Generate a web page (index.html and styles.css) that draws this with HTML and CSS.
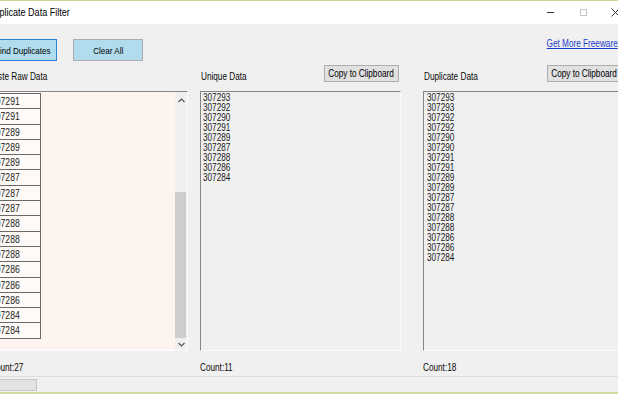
FILE: index.html
```html
<!DOCTYPE html>
<html>
<head>
<meta charset="utf-8">
<title>Duplicate Data Filter</title>
<link rel="stylesheet" href="styles.css">
</head>
<body>
<div class="window">
  <div class="titlebar">
    <span class="title sq">Duplicate Data Filter</span>
    <div class="controls">
      <span class="ctl"><span class="min-glyph"></span></span>
      <span class="ctl"><span class="max-glyph"></span></span>
      <span class="ctl"><svg class="close-glyph" width="9" height="9" viewBox="0 0 9 9"><path d="M0.5 0.5L8.5 8.5M8.5 0.5L0.5 8.5" stroke="#333" stroke-width="1"/></svg></span>
    </div>
  </div>
  <div class="content">
    <div class="toolbar">
      <button class="btn btn-blue btn-focus"><span class="sqc">Find Duplicates</span></button>
      <button class="btn btn-blue btn-clear"><span class="sqc">Clear All</span></button>
      <a class="link" href="#">Get More Freeware</a>
    </div>
    <div class="columns">
      <div class="col">
        <div class="colhead"><span class="label sq">Paste Raw Data</span></div>
        <div class="panel panel-raw">
          <div class="raw-body">
            <div class="cells">
              <div class="cell"><span class="sq">307291</span></div>
              <div class="cell"><span class="sq">307291</span></div>
              <div class="cell"><span class="sq">307289</span></div>
              <div class="cell"><span class="sq">307289</span></div>
              <div class="cell"><span class="sq">307289</span></div>
              <div class="cell"><span class="sq">307287</span></div>
              <div class="cell"><span class="sq">307287</span></div>
              <div class="cell"><span class="sq">307287</span></div>
              <div class="cell"><span class="sq">307288</span></div>
              <div class="cell"><span class="sq">307288</span></div>
              <div class="cell"><span class="sq">307288</span></div>
              <div class="cell"><span class="sq">307286</span></div>
              <div class="cell"><span class="sq">307286</span></div>
              <div class="cell"><span class="sq">307286</span></div>
              <div class="cell"><span class="sq">307284</span></div>
              <div class="cell"><span class="sq">307284</span></div>
            </div>
          </div>
          <div class="scrollbar">
            <div class="sb-btn sb-up"><svg width="7" height="5" viewBox="0 0 7 5"><path d="M0.5 4L3.5 1L6.5 4" fill="none" stroke="#555" stroke-width="1.2"/></svg></div>
            <div class="sb-track"><div class="sb-thumb"></div></div>
            <div class="sb-btn sb-down"><svg width="7" height="5" viewBox="0 0 7 5"><path d="M0.5 1L3.5 4L6.5 1" fill="none" stroke="#555" stroke-width="1.2"/></svg></div>
          </div>
        </div>
        <div class="count count-raw"><span class="sq">Count:27</span></div>
      </div>
      <div class="col col-unique">
        <div class="colhead">
          <span class="label sq">Unique Data</span>
          <button class="btn btn-copy"><span class="sqc">Copy to Clipboard</span></button>
        </div>
        <div class="panel panel-list">
          <div class="list">
            <div class="line">307293</div>
            <div class="line">307292</div>
            <div class="line">307290</div>
            <div class="line">307291</div>
            <div class="line">307289</div>
            <div class="line">307287</div>
            <div class="line">307288</div>
            <div class="line">307286</div>
            <div class="line">307284</div>
          </div>
        </div>
        <div class="count"><span class="sq">Count:11</span></div>
      </div>
      <div class="col col-dup">
        <div class="colhead">
          <span class="label sq">Duplicate Data</span>
          <button class="btn btn-copy"><span class="sqc">Copy to Clipboard</span></button>
        </div>
        <div class="panel panel-list panel-dup">
          <div class="list">
            <div class="line">307293</div>
            <div class="line">307293</div>
            <div class="line">307292</div>
            <div class="line">307292</div>
            <div class="line">307290</div>
            <div class="line">307290</div>
            <div class="line">307291</div>
            <div class="line">307291</div>
            <div class="line">307289</div>
            <div class="line">307289</div>
            <div class="line">307287</div>
            <div class="line">307287</div>
            <div class="line">307288</div>
            <div class="line">307288</div>
            <div class="line">307286</div>
            <div class="line">307286</div>
            <div class="line">307284</div>
          </div>
        </div>
        <div class="count"><span class="sq">Count:18</span></div>
      </div>
    </div>
  </div>
  <div class="footer"><div class="sizebox"></div></div>
</div>
</body>
</html>
```

FILE: styles.css
```css
* { box-sizing: border-box; }

html, body {
  margin: 0;
  padding: 0;
  width: 618px;
  height: 394px;
  overflow: hidden;
  background: #f0f0f0;
}

body {
  font-family: "Liberation Sans", Arial, sans-serif;
  font-size: 10px;
  color: #0a0a0a;
}

/* Narrow (Arial Narrow-like) rendering of text */
.sq {
  display: inline-block;
  white-space: nowrap;
  transform: scaleX(0.82);
  transform-origin: left center;
}

.sqc {
  display: inline-block;
  white-space: nowrap;
  transform: scaleX(0.82);
  transform-origin: center center;
}

.window {
  width: 652px;
  height: 394px;
  margin-left: -20px;
  display: flex;
  flex-direction: column;
  background: #f0f0f0;
  border-bottom: 2px solid #cddca0;
}

.titlebar {
  height: 24px;
  flex: none;
  background: #fff;
  border-top: 1px solid #cbd99c;
  display: flex;
  align-items: center;
}

.title {
  margin-left: 8px;
  font-size: 11px;
  color: #000;
  line-height: 23px;
}

.controls {
  margin-left: auto;
  display: flex;
  height: 23px;
}

.ctl {
  width: 32.5px;
  height: 23px;
  display: flex;
  align-items: center;
  justify-content: center;
}

.min-glyph {
  width: 7px;
  height: 1px;
  background: #333;
}

.max-glyph {
  width: 7px;
  height: 7px;
  border: 1px solid #c4c4c4;
}

.content {
  padding: 15px 14px 0 7px;
  flex: none;
}

.toolbar {
  display: flex;
  height: 22px;
}

.btn {
  font-family: inherit;
  font-size: 10px;
  color: #000;
  padding: 0;
  margin: 0;
  cursor: default;
  display: flex;
  align-items: center;
  justify-content: center;
  white-space: nowrap;
  flex: none;
}

.btn-blue {
  width: 70px;
  height: 22px;
  background: #b0dcee;
  border: 1px solid #adadad;
  font-size: 9.8px;
}

.btn-focus {
  border-color: #2b82d6;
  padding-left: 2px;
}

.btn-clear {
  margin-left: 16px;
}

.link {
  margin-left: auto;
  align-self: flex-start;
  line-height: 10px;
  color: #1a3ccc;
  text-decoration: underline;
  white-space: nowrap;
  display: inline-block;
  transform: scaleX(0.82);
  transform-origin: right center;
}

.columns {
  display: flex;
  margin-top: 4px;
}

.col {
  width: 201px;
  flex: none;
  display: flex;
  flex-direction: column;
}

.col-unique { margin-left: 12px; }
.col-dup { margin-left: 22px; }

.colhead {
  height: 17px;
  display: flex;
  align-items: flex-end;
  justify-content: space-between;
}

.label {
  line-height: 12px;
  margin-bottom: -1px;
  margin-left: 1px;
}

.btn-copy {
  width: 75px;
  height: 17px;
  margin-right: 2px;
  background: #e1e1e1;
  border: 1px solid #adadad;
  align-self: flex-start;
}

.panel {
  margin-top: 9px;
  height: 260px;
  border-top: 1px solid #858585;
  border-left: 1px solid #858585;
  border-right: 1px solid #fbfbfb;
  border-bottom: 1px solid #fbfbfb;
}

.panel-raw {
  display: flex;
  background: #fdf4ef;
}

.raw-body {
  flex: 1;
  padding: 1px 0 0 2px;
}

.cells {
  width: 50.5px;
  border-top: 1px solid #6a6a6a;
}

.cell {
  height: 15.3px;
  line-height: 14px;
  padding-left: 0;
  font-size: 10.5px;
  color: #222;
  background: #fefaf7;
  border-left: 1px solid #6a6a6a;
  border-right: 1.3px solid #6a6a6a;
  border-bottom: 1.3px solid #6a6a6a;
}

.scrollbar {
  width: 12px;
  display: flex;
  flex-direction: column;
  background: #f0f0f0;
}

.sb-btn {
  display: flex;
  align-items: center;
  justify-content: center;
}

.sb-up { height: 16px; }
.sb-down { height: 12px; }

.sb-track {
  flex: 1;
  padding-top: 84px;
}

.sb-thumb {
  height: 146px;
  margin-right: 1px;
  background: #cdcdcd;
}

.panel-list {
  padding: 1px 2px;
  background: #f0f0f0;
}

.panel-dup {
  padding-left: 2.5px;
}

.list {
  transform: scaleX(0.82);
  transform-origin: left top;
}

.line {
  line-height: 10px;
  height: 10px;
  color: #1a1a1a;
  white-space: nowrap;
}

.count {
  margin-top: 11px;
  line-height: 12px;
}

.count-raw {
  padding-left: 2.5px;
}

.footer {
  margin-top: auto;
  height: 16px;
  border-top: 1px solid #dcdcdc;
  padding-top: 2px;
  flex: none;
}

.sizebox {
  width: 55px;
  margin-left: 2px;
  height: 12px;
  background: #e3e3e3;
  border: 1px solid #c6c6c6;
}
```
